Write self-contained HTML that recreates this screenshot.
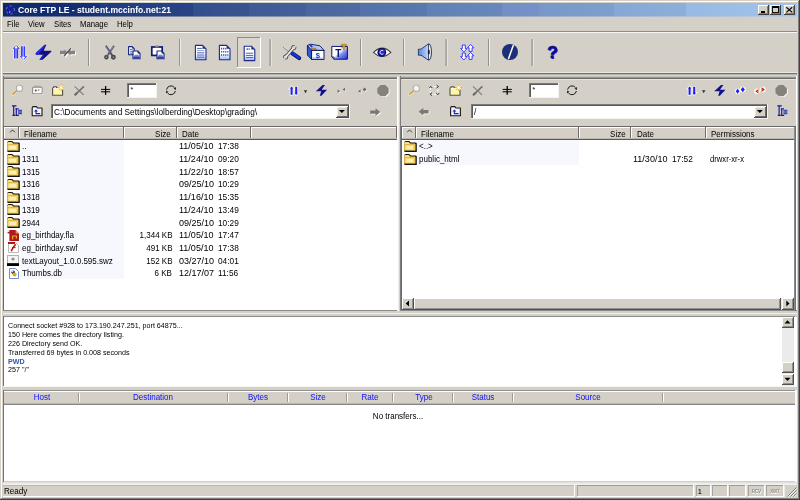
<!DOCTYPE html>
<html><head><meta charset="utf-8"><title>Core FTP LE</title>
<style>
html,body{margin:0;padding:0}
body{width:800px;height:500px;overflow:hidden;background:#d4d0c8;position:relative;font-family:"Liberation Sans",sans-serif;}
div,span.t,svg{position:absolute;display:block}
span.t{white-space:pre}
#w{left:0;top:0;width:800px;height:500px;will-change:transform}
</style></head><body><div id="w">
<div style="left:1px;top:1px;width:797px;height:1px;background:#ffffff;"></div>
<div style="left:1px;top:1px;width:1px;height:497px;background:#ffffff;"></div>
<div style="left:799px;top:0px;width:1px;height:500px;background:#404040;"></div>
<div style="left:798px;top:1px;width:1px;height:498px;background:#808080;"></div>
<div style="left:0px;top:499px;width:800px;height:1px;background:#404040;"></div>
<div style="left:1px;top:498px;width:798px;height:1px;background:#808080;"></div>
<div style="left:3px;top:3px;width:794px;height:13px;background:linear-gradient(to right,#0a246a,#a6caf0);"></div>
<div style="left:3px;top:3px;width:794px;height:13px;background:linear-gradient(to right,#102a70 0px,#102a70 97px,#223e82 97px,#223e82 190px,#355290 190px,#355290 246px,#405d98 246px,#405d98 303px,#4d689e 303px,#4d689e 357px,#5675ac 357px,#5675ac 424px,#6484b8 424px,#6484b8 499px,#7790cb 499px,#7790cb 536px,#7a9ccb 536px,#7a9ccb 611px,#89abd7 611px,#89abd7 683px,#9dc0e9 683px,#9dc0e9 794px);opacity:.55;"></div>
<div style="left:3px;top:16px;width:794px;height:1px;background:linear-gradient(to right,#0a246a,#a6caf0);opacity:.55;"></div>
<span class="t " style="left:18px;top:4px;font-size:9px;line-height:12px;height:12px;color:#fff;font-weight:bold;transform:scaleX(0.954);transform-origin:0 0;">Core FTP LE - student.mccinfo.net:21</span>
<svg style="left:5px;top:4px" width="11" height="12" viewBox="0 0 11 12"><circle cx="5.3" cy="6" r="3.9" fill="#1c1ca4"/><circle cx="5.3" cy="6" r="4.1" fill="none" stroke="#9aa8dc" stroke-width=".9" stroke-dasharray="2.2 2.6" stroke-dashoffset="1" opacity=".75"/><path d="M3.8 9.6 L6.6 2.6" stroke="#0c2470" stroke-width="1"/><path d="M4.4 9 L5.2 7" stroke="#c8b8d8" stroke-width=".8"/></svg>
<div style="left:758px;top:5px;width:11px;height:10px;background:#d4d0c8;"></div>
<div style="left:758px;top:5px;width:11px;height:1px;background:#ffffff;"></div>
<div style="left:758px;top:5px;width:1px;height:10px;background:#ffffff;"></div>
<div style="left:758px;top:14px;width:11px;height:1px;background:#404040;"></div>
<div style="left:768px;top:5px;width:1px;height:10px;background:#404040;"></div>
<div style="left:759px;top:13px;width:9px;height:1px;background:#808080;"></div>
<div style="left:767px;top:6px;width:1px;height:8px;background:#808080;"></div>
<div style="left:761px;top:11px;width:4px;height:2px;background:#000;"></div>
<div style="left:770px;top:5px;width:11px;height:10px;background:#d4d0c8;"></div>
<div style="left:770px;top:5px;width:11px;height:1px;background:#ffffff;"></div>
<div style="left:770px;top:5px;width:1px;height:10px;background:#ffffff;"></div>
<div style="left:770px;top:14px;width:11px;height:1px;background:#404040;"></div>
<div style="left:780px;top:5px;width:1px;height:10px;background:#404040;"></div>
<div style="left:771px;top:13px;width:9px;height:1px;background:#808080;"></div>
<div style="left:779px;top:6px;width:1px;height:8px;background:#808080;"></div>
<div style="left:772px;top:6px;width:7px;height:7px;background:transparent;border:1px solid #111;border-top:2px solid #000;box-sizing:border-box;"></div>
<div style="left:784px;top:5px;width:11px;height:10px;background:#d4d0c8;"></div>
<div style="left:784px;top:5px;width:11px;height:1px;background:#ffffff;"></div>
<div style="left:784px;top:5px;width:1px;height:10px;background:#ffffff;"></div>
<div style="left:784px;top:14px;width:11px;height:1px;background:#404040;"></div>
<div style="left:794px;top:5px;width:1px;height:10px;background:#404040;"></div>
<div style="left:785px;top:13px;width:9px;height:1px;background:#808080;"></div>
<div style="left:793px;top:6px;width:1px;height:8px;background:#808080;"></div>
<svg style="left:786px;top:7px" width="7" height="6" viewBox="0 0 7 6"><path d="M0.4 0.3 L6.2 5.4 M6.2 0.3 L0.4 5.4" stroke="#000" stroke-width="1.15" fill="none"/></svg>
<span class="t " style="left:7px;top:18px;font-size:9px;line-height:12px;height:12px;color:#000;transform:scaleX(0.86);transform-origin:0 0;">File</span>
<span class="t " style="left:28px;top:18px;font-size:9px;line-height:12px;height:12px;color:#000;transform:scaleX(0.86);transform-origin:0 0;">View</span>
<span class="t " style="left:54px;top:18px;font-size:9px;line-height:12px;height:12px;color:#000;transform:scaleX(0.86);transform-origin:0 0;">Sites</span>
<span class="t " style="left:80px;top:18px;font-size:9px;line-height:12px;height:12px;color:#000;transform:scaleX(0.86);transform-origin:0 0;">Manage</span>
<span class="t " style="left:117px;top:18px;font-size:9px;line-height:12px;height:12px;color:#000;transform:scaleX(0.86);transform-origin:0 0;">Help</span>
<div style="left:3px;top:31px;width:794px;height:1px;background:#8c8c8c;"></div>
<div style="left:3px;top:32px;width:794px;height:1px;background:#f6f6f4;"></div>
<div style="left:88px;top:39px;width:1px;height:27px;background:#929290;"></div>
<div style="left:89px;top:39px;width:1px;height:27px;background:#f0efec;"></div>
<div style="left:179px;top:39px;width:1px;height:27px;background:#929290;"></div>
<div style="left:180px;top:39px;width:1px;height:27px;background:#f0efec;"></div>
<div style="left:269px;top:39px;width:1px;height:27px;background:#b2b0aa;"></div>
<div style="left:270px;top:39px;width:1px;height:27px;background:#a6a4a0;"></div>
<div style="left:271px;top:39px;width:1px;height:27px;background:#e8e6e2;"></div>
<div style="left:360px;top:39px;width:1px;height:27px;background:#929290;"></div>
<div style="left:361px;top:39px;width:1px;height:27px;background:#f0efec;"></div>
<div style="left:403px;top:39px;width:1px;height:27px;background:#929290;"></div>
<div style="left:404px;top:39px;width:1px;height:27px;background:#f0efec;"></div>
<div style="left:445px;top:39px;width:1px;height:27px;background:#b2b0aa;"></div>
<div style="left:446px;top:39px;width:1px;height:27px;background:#a6a4a0;"></div>
<div style="left:447px;top:39px;width:1px;height:27px;background:#e8e6e2;"></div>
<div style="left:488px;top:39px;width:1px;height:27px;background:#929290;"></div>
<div style="left:489px;top:39px;width:1px;height:27px;background:#f0efec;"></div>
<div style="left:531px;top:39px;width:1px;height:27px;background:#b2b0aa;"></div>
<div style="left:532px;top:39px;width:1px;height:27px;background:#a6a4a0;"></div>
<div style="left:533px;top:39px;width:1px;height:27px;background:#e8e6e2;"></div>
<div style="left:3px;top:72px;width:794px;height:1px;background:#ebe9e4;"></div>
<div style="left:3px;top:73px;width:794px;height:1px;background:#6e6e6c;"></div>
<div style="left:3px;top:74px;width:794px;height:1px;background:#bab6ae;"></div>
<div style="left:237px;top:37px;width:23px;height:30px;background:#d9d6cf;"></div>
<div style="left:237px;top:37px;width:23px;height:1px;background:#8a8a88;"></div>
<div style="left:237px;top:37px;width:1px;height:30px;background:#8a8a88;"></div>
<div style="left:237px;top:67px;width:24px;height:1px;background:#ffffff;"></div>
<div style="left:260px;top:37px;width:1px;height:31px;background:#ffffff;"></div>
<div style="left:3px;top:76px;width:394px;height:1px;background:#c6c2ba;"></div>
<div style="left:3px;top:77px;width:394px;height:1px;background:#9c9890;"></div>
<div style="left:3px;top:78px;width:394px;height:1px;background:#6c6c6c;"></div>
<div style="left:5px;top:79px;width:392px;height:1px;background:#e6e4de;"></div>
<div style="left:3px;top:76px;width:1px;height:235px;background:#7c7c7c;"></div>
<div style="left:4px;top:127px;width:393px;height:183px;background:#ffffff;"></div>
<div style="left:3px;top:126px;width:394px;height:1px;background:#686868;"></div>
<div style="left:3px;top:126px;width:1px;height:184px;background:#686868;"></div>
<div style="left:4px;top:127px;width:393px;height:12px;background:#d4d0c8;"></div>
<div style="left:4px;top:127px;width:1px;height:11px;background:#ffffff;"></div>
<div style="left:4px;top:127px;width:14px;height:1px;background:#ffffff;"></div>
<div style="left:18px;top:127px;width:1px;height:12px;background:#6c6c6c;"></div>
<div style="left:19px;top:127px;width:1px;height:11px;background:#ffffff;"></div>
<div style="left:19px;top:127px;width:104px;height:1px;background:#ffffff;"></div>
<div style="left:123px;top:127px;width:1px;height:12px;background:#6c6c6c;"></div>
<span class="t " style="left:24px;top:128px;font-size:9.6px;line-height:11px;height:11px;color:#000;transform:scaleX(0.834);transform-origin:0 0;">Filename</span>
<div style="left:124px;top:127px;width:1px;height:11px;background:#ffffff;"></div>
<div style="left:124px;top:127px;width:52px;height:1px;background:#ffffff;"></div>
<div style="left:176px;top:127px;width:1px;height:12px;background:#6c6c6c;"></div>
<span class="t " style="right:629px;top:128px;font-size:9.6px;line-height:11px;height:11px;color:#000;transform:scaleX(0.834);transform-origin:100% 0;">Size</span>
<div style="left:177px;top:127px;width:1px;height:11px;background:#ffffff;"></div>
<div style="left:177px;top:127px;width:73px;height:1px;background:#ffffff;"></div>
<div style="left:250px;top:127px;width:1px;height:12px;background:#6c6c6c;"></div>
<span class="t " style="left:181.5px;top:128px;font-size:9.6px;line-height:11px;height:11px;color:#000;transform:scaleX(0.834);transform-origin:0 0;">Date</span>
<div style="left:251px;top:127px;width:1px;height:11px;background:#ffffff;"></div>
<div style="left:251px;top:127px;width:145px;height:1px;background:#ffffff;"></div>
<div style="left:396px;top:127px;width:1px;height:12px;background:#6c6c6c;"></div>
<div style="left:4px;top:138px;width:393px;height:1px;background:#bcb8b0;"></div>
<div style="left:4px;top:139px;width:393px;height:1px;background:#585858;"></div>
<div style="left:20px;top:140px;width:104px;height:139px;background:#f7f7fe;"></div>
<svg style="left:9px;top:129px" width="7" height="4" viewBox="0 0 7 4"><path d="M1.1 3.3 L3.5 0.9 L5.9 3.3" stroke="#3a3a3a" stroke-width="1" fill="none"/></svg>
<div style="left:4px;top:310px;width:393px;height:1px;background:#8a8a8a;"></div>
<svg style="left:7px;top:141px" width="13" height="11" viewBox="0 0 13 11"><path d="M0.2 2.2 Q0.2 0 2 0 H5.2 L6.8 1.5 H11.6 Q12.8 1.5 12.8 2.8 V11 H1.2 Q0.2 11 0.2 10 Z" fill="#181208"/><path d="M0 2.5 Q0 1 1.6 1 H4.8 L6.2 2.6 H10.6 Q11.5 2.6 11.5 3.5 V9.6 H0.9 Q0 9.6 0 8.8 Z" fill="#f2cc58"/><path d="M0 3 V8.8 Q0 9.6 0.9 9.6 H1 V3 Z" fill="#dcae40"/><path d="M1 1.5 H4.6 L5.7 2.8 H1 Z" fill="#fbe9a0"/><path d="M0.8 3.3 H10.9 V4.2 H0.8 Z" fill="#e0b044"/><path d="M0.9 4.2 H11 V9.2 H0.9 Z" fill="#f6d76c"/><rect x="2.4" y="4.8" width="7.2" height="3.4" fill="#fdf0b4"/><path d="M9.6 5 H11 V9.2 H9.6 Z" fill="#eec24e"/></svg>
<span class="t " style="left:22px;top:140.37px;font-size:9.6px;line-height:12px;height:12px;color:#000;transform:scaleX(0.834);transform-origin:0 0;">..</span>
<span class="t " style="left:178.7px;top:140.37px;font-size:9.6px;line-height:12px;height:12px;color:#000;transform:scaleX(0.94);transform-origin:0 0;">11/05/10</span>
<span class="t " style="left:217.9px;top:140.37px;font-size:9.6px;line-height:12px;height:12px;color:#000;transform:scaleX(0.865);transform-origin:0 0;">17:38</span>
<svg style="left:7px;top:154px" width="13" height="11" viewBox="0 0 13 11"><path d="M0.2 2.2 Q0.2 0 2 0 H5.2 L6.8 1.5 H11.6 Q12.8 1.5 12.8 2.8 V11 H1.2 Q0.2 11 0.2 10 Z" fill="#181208"/><path d="M0 2.5 Q0 1 1.6 1 H4.8 L6.2 2.6 H10.6 Q11.5 2.6 11.5 3.5 V9.6 H0.9 Q0 9.6 0 8.8 Z" fill="#f2cc58"/><path d="M0 3 V8.8 Q0 9.6 0.9 9.6 H1 V3 Z" fill="#dcae40"/><path d="M1 1.5 H4.6 L5.7 2.8 H1 Z" fill="#fbe9a0"/><path d="M0.8 3.3 H10.9 V4.2 H0.8 Z" fill="#e0b044"/><path d="M0.9 4.2 H11 V9.2 H0.9 Z" fill="#f6d76c"/><rect x="2.4" y="4.8" width="7.2" height="3.4" fill="#fdf0b4"/><path d="M9.6 5 H11 V9.2 H9.6 Z" fill="#eec24e"/></svg>
<span class="t " style="left:22px;top:153.07px;font-size:9.6px;line-height:12px;height:12px;color:#000;transform:scaleX(0.834);transform-origin:0 0;">1311</span>
<span class="t " style="left:178.7px;top:153.07px;font-size:9.6px;line-height:12px;height:12px;color:#000;transform:scaleX(0.94);transform-origin:0 0;">11/24/10</span>
<span class="t " style="left:217.9px;top:153.07px;font-size:9.6px;line-height:12px;height:12px;color:#000;transform:scaleX(0.865);transform-origin:0 0;">09:20</span>
<svg style="left:7px;top:166px" width="13" height="11" viewBox="0 0 13 11"><path d="M0.2 2.2 Q0.2 0 2 0 H5.2 L6.8 1.5 H11.6 Q12.8 1.5 12.8 2.8 V11 H1.2 Q0.2 11 0.2 10 Z" fill="#181208"/><path d="M0 2.5 Q0 1 1.6 1 H4.8 L6.2 2.6 H10.6 Q11.5 2.6 11.5 3.5 V9.6 H0.9 Q0 9.6 0 8.8 Z" fill="#f2cc58"/><path d="M0 3 V8.8 Q0 9.6 0.9 9.6 H1 V3 Z" fill="#dcae40"/><path d="M1 1.5 H4.6 L5.7 2.8 H1 Z" fill="#fbe9a0"/><path d="M0.8 3.3 H10.9 V4.2 H0.8 Z" fill="#e0b044"/><path d="M0.9 4.2 H11 V9.2 H0.9 Z" fill="#f6d76c"/><rect x="2.4" y="4.8" width="7.2" height="3.4" fill="#fdf0b4"/><path d="M9.6 5 H11 V9.2 H9.6 Z" fill="#eec24e"/></svg>
<span class="t " style="left:22px;top:165.77px;font-size:9.6px;line-height:12px;height:12px;color:#000;transform:scaleX(0.834);transform-origin:0 0;">1315</span>
<span class="t " style="left:178.7px;top:165.77px;font-size:9.6px;line-height:12px;height:12px;color:#000;transform:scaleX(0.94);transform-origin:0 0;">11/22/10</span>
<span class="t " style="left:217.9px;top:165.77px;font-size:9.6px;line-height:12px;height:12px;color:#000;transform:scaleX(0.865);transform-origin:0 0;">18:57</span>
<svg style="left:7px;top:179px" width="13" height="11" viewBox="0 0 13 11"><path d="M0.2 2.2 Q0.2 0 2 0 H5.2 L6.8 1.5 H11.6 Q12.8 1.5 12.8 2.8 V11 H1.2 Q0.2 11 0.2 10 Z" fill="#181208"/><path d="M0 2.5 Q0 1 1.6 1 H4.8 L6.2 2.6 H10.6 Q11.5 2.6 11.5 3.5 V9.6 H0.9 Q0 9.6 0 8.8 Z" fill="#f2cc58"/><path d="M0 3 V8.8 Q0 9.6 0.9 9.6 H1 V3 Z" fill="#dcae40"/><path d="M1 1.5 H4.6 L5.7 2.8 H1 Z" fill="#fbe9a0"/><path d="M0.8 3.3 H10.9 V4.2 H0.8 Z" fill="#e0b044"/><path d="M0.9 4.2 H11 V9.2 H0.9 Z" fill="#f6d76c"/><rect x="2.4" y="4.8" width="7.2" height="3.4" fill="#fdf0b4"/><path d="M9.6 5 H11 V9.2 H9.6 Z" fill="#eec24e"/></svg>
<span class="t " style="left:22px;top:178.47px;font-size:9.6px;line-height:12px;height:12px;color:#000;transform:scaleX(0.834);transform-origin:0 0;">1316</span>
<span class="t " style="left:178.7px;top:178.47px;font-size:9.6px;line-height:12px;height:12px;color:#000;transform:scaleX(0.94);transform-origin:0 0;">09/25/10</span>
<span class="t " style="left:217.9px;top:178.47px;font-size:9.6px;line-height:12px;height:12px;color:#000;transform:scaleX(0.865);transform-origin:0 0;">10:29</span>
<svg style="left:7px;top:192px" width="13" height="11" viewBox="0 0 13 11"><path d="M0.2 2.2 Q0.2 0 2 0 H5.2 L6.8 1.5 H11.6 Q12.8 1.5 12.8 2.8 V11 H1.2 Q0.2 11 0.2 10 Z" fill="#181208"/><path d="M0 2.5 Q0 1 1.6 1 H4.8 L6.2 2.6 H10.6 Q11.5 2.6 11.5 3.5 V9.6 H0.9 Q0 9.6 0 8.8 Z" fill="#f2cc58"/><path d="M0 3 V8.8 Q0 9.6 0.9 9.6 H1 V3 Z" fill="#dcae40"/><path d="M1 1.5 H4.6 L5.7 2.8 H1 Z" fill="#fbe9a0"/><path d="M0.8 3.3 H10.9 V4.2 H0.8 Z" fill="#e0b044"/><path d="M0.9 4.2 H11 V9.2 H0.9 Z" fill="#f6d76c"/><rect x="2.4" y="4.8" width="7.2" height="3.4" fill="#fdf0b4"/><path d="M9.6 5 H11 V9.2 H9.6 Z" fill="#eec24e"/></svg>
<span class="t " style="left:22px;top:191.17px;font-size:9.6px;line-height:12px;height:12px;color:#000;transform:scaleX(0.834);transform-origin:0 0;">1318</span>
<span class="t " style="left:178.7px;top:191.17px;font-size:9.6px;line-height:12px;height:12px;color:#000;transform:scaleX(0.94);transform-origin:0 0;">11/16/10</span>
<span class="t " style="left:217.9px;top:191.17px;font-size:9.6px;line-height:12px;height:12px;color:#000;transform:scaleX(0.865);transform-origin:0 0;">15:35</span>
<svg style="left:7px;top:204px" width="13" height="11" viewBox="0 0 13 11"><path d="M0.2 2.2 Q0.2 0 2 0 H5.2 L6.8 1.5 H11.6 Q12.8 1.5 12.8 2.8 V11 H1.2 Q0.2 11 0.2 10 Z" fill="#181208"/><path d="M0 2.5 Q0 1 1.6 1 H4.8 L6.2 2.6 H10.6 Q11.5 2.6 11.5 3.5 V9.6 H0.9 Q0 9.6 0 8.8 Z" fill="#f2cc58"/><path d="M0 3 V8.8 Q0 9.6 0.9 9.6 H1 V3 Z" fill="#dcae40"/><path d="M1 1.5 H4.6 L5.7 2.8 H1 Z" fill="#fbe9a0"/><path d="M0.8 3.3 H10.9 V4.2 H0.8 Z" fill="#e0b044"/><path d="M0.9 4.2 H11 V9.2 H0.9 Z" fill="#f6d76c"/><rect x="2.4" y="4.8" width="7.2" height="3.4" fill="#fdf0b4"/><path d="M9.6 5 H11 V9.2 H9.6 Z" fill="#eec24e"/></svg>
<span class="t " style="left:22px;top:203.87px;font-size:9.6px;line-height:12px;height:12px;color:#000;transform:scaleX(0.834);transform-origin:0 0;">1319</span>
<span class="t " style="left:178.7px;top:203.87px;font-size:9.6px;line-height:12px;height:12px;color:#000;transform:scaleX(0.94);transform-origin:0 0;">11/24/10</span>
<span class="t " style="left:217.9px;top:203.87px;font-size:9.6px;line-height:12px;height:12px;color:#000;transform:scaleX(0.865);transform-origin:0 0;">13:49</span>
<svg style="left:7px;top:217px" width="13" height="11" viewBox="0 0 13 11"><path d="M0.2 2.2 Q0.2 0 2 0 H5.2 L6.8 1.5 H11.6 Q12.8 1.5 12.8 2.8 V11 H1.2 Q0.2 11 0.2 10 Z" fill="#181208"/><path d="M0 2.5 Q0 1 1.6 1 H4.8 L6.2 2.6 H10.6 Q11.5 2.6 11.5 3.5 V9.6 H0.9 Q0 9.6 0 8.8 Z" fill="#f2cc58"/><path d="M0 3 V8.8 Q0 9.6 0.9 9.6 H1 V3 Z" fill="#dcae40"/><path d="M1 1.5 H4.6 L5.7 2.8 H1 Z" fill="#fbe9a0"/><path d="M0.8 3.3 H10.9 V4.2 H0.8 Z" fill="#e0b044"/><path d="M0.9 4.2 H11 V9.2 H0.9 Z" fill="#f6d76c"/><rect x="2.4" y="4.8" width="7.2" height="3.4" fill="#fdf0b4"/><path d="M9.6 5 H11 V9.2 H9.6 Z" fill="#eec24e"/></svg>
<span class="t " style="left:22px;top:216.57px;font-size:9.6px;line-height:12px;height:12px;color:#000;transform:scaleX(0.834);transform-origin:0 0;">2944</span>
<span class="t " style="left:178.7px;top:216.57px;font-size:9.6px;line-height:12px;height:12px;color:#000;transform:scaleX(0.94);transform-origin:0 0;">09/25/10</span>
<span class="t " style="left:217.9px;top:216.57px;font-size:9.6px;line-height:12px;height:12px;color:#000;transform:scaleX(0.865);transform-origin:0 0;">10:29</span>
<svg style="left:7px;top:230px" width="12" height="11" viewBox="0 0 12 11"><path d="M2.4 0 H8.6 L12 3.4 V11 H2.4 Z" fill="#ae1820"/><path d="M0.6 1.8 H4 V3.4 H0.6 Z" fill="#ae1820"/><path d="M8.6 0 V3.4 H12 Z" fill="#e89858"/><path d="M5.6 9.4 V6 H9.4 V8.4" stroke="#eaa428" stroke-width="1.2" fill="none"/></svg>
<span class="t " style="left:22px;top:229.27px;font-size:9.6px;line-height:12px;height:12px;color:#000;transform:scaleX(0.834);transform-origin:0 0;">eg_birthday.fla</span>
<span class="t " style="right:628px;top:229.27px;font-size:9.6px;line-height:12px;height:12px;color:#000;transform:scaleX(0.834);transform-origin:100% 0;">1,344 KB</span>
<span class="t " style="left:178.7px;top:229.27px;font-size:9.6px;line-height:12px;height:12px;color:#000;transform:scaleX(0.94);transform-origin:0 0;">11/05/10</span>
<span class="t " style="left:217.9px;top:229.27px;font-size:9.6px;line-height:12px;height:12px;color:#000;transform:scaleX(0.865);transform-origin:0 0;">17:47</span>
<svg style="left:8px;top:242px" width="11" height="11" viewBox="0 0 11 11"><path d="M0.5 0.5 H7.5 L10.5 3.5 V10.5 H0.5 Z" fill="#fff" stroke="#b8b8b8"/><path d="M0 0 H7 V2 H0 Z" fill="#b01818"/><path d="M7.6 2.2 C6 4 4.5 6 3.2 9.2" stroke="#c01010" stroke-width="1.6" fill="none"/><path d="M4 5.6 H7.6" stroke="#c01010" stroke-width="1"/></svg>
<span class="t " style="left:22px;top:241.97px;font-size:9.6px;line-height:12px;height:12px;color:#000;transform:scaleX(0.834);transform-origin:0 0;">eg_birthday.swf</span>
<span class="t " style="right:628px;top:241.97px;font-size:9.6px;line-height:12px;height:12px;color:#000;transform:scaleX(0.834);transform-origin:100% 0;">491 KB</span>
<span class="t " style="left:178.7px;top:241.97px;font-size:9.6px;line-height:12px;height:12px;color:#000;transform:scaleX(0.94);transform-origin:0 0;">11/05/10</span>
<span class="t " style="left:217.9px;top:241.97px;font-size:9.6px;line-height:12px;height:12px;color:#000;transform:scaleX(0.865);transform-origin:0 0;">17:38</span>
<svg style="left:7px;top:255px" width="12" height="11" viewBox="0 0 12 11"><rect x="0.5" y="0.5" width="11" height="8" fill="#f4f4f4" stroke="#b0b0b0"/><rect x="0" y="8.2" width="12" height="2.8" fill="#000"/><circle cx="6" cy="4" r="1.6" fill="#909090"/></svg>
<span class="t " style="left:22px;top:254.67px;font-size:9.6px;line-height:12px;height:12px;color:#000;transform:scaleX(0.834);transform-origin:0 0;">textLayout_1.0.0.595.swz</span>
<span class="t " style="right:628px;top:254.67px;font-size:9.6px;line-height:12px;height:12px;color:#000;transform:scaleX(0.834);transform-origin:100% 0;">152 KB</span>
<span class="t " style="left:178.7px;top:254.67px;font-size:9.6px;line-height:12px;height:12px;color:#000;transform:scaleX(0.94);transform-origin:0 0;">03/27/10</span>
<span class="t " style="left:217.9px;top:254.67px;font-size:9.6px;line-height:12px;height:12px;color:#000;transform:scaleX(0.865);transform-origin:0 0;">04:01</span>
<svg style="left:9px;top:268px" width="10" height="11" viewBox="0 0 10 11"><path d="M0.5 0.5 H6.5 L9.5 3.5 V10.5 H0.5 Z" fill="#fff" stroke="#6a90d8"/><circle cx="4.2" cy="4.2" r="1.8" fill="#333"/><circle cx="5.6" cy="6.4" r="2" fill="#e0a820"/><circle cx="3.6" cy="3.6" r="0.8" fill="#e8e8ff"/></svg>
<span class="t " style="left:22px;top:267.37px;font-size:9.6px;line-height:12px;height:12px;color:#000;transform:scaleX(0.834);transform-origin:0 0;">Thumbs.db</span>
<span class="t " style="right:628px;top:267.37px;font-size:9.6px;line-height:12px;height:12px;color:#000;transform:scaleX(0.834);transform-origin:100% 0;">6 KB</span>
<span class="t " style="left:178.7px;top:267.37px;font-size:9.6px;line-height:12px;height:12px;color:#000;transform:scaleX(0.94);transform-origin:0 0;">12/17/07</span>
<span class="t " style="left:217.9px;top:267.37px;font-size:9.6px;line-height:12px;height:12px;color:#000;transform:scaleX(0.865);transform-origin:0 0;">11:56</span>
<div style="left:400px;top:76px;width:397px;height:1px;background:#c6c2ba;"></div>
<div style="left:400px;top:77px;width:397px;height:1px;background:#9c9890;"></div>
<div style="left:400px;top:78px;width:397px;height:1px;background:#6c6c6c;"></div>
<div style="left:402px;top:79px;width:395px;height:1px;background:#e6e4de;"></div>
<div style="left:400px;top:76px;width:1px;height:235px;background:#7c7c7c;"></div>
<div style="left:401px;top:127px;width:1px;height:183px;background:#606060;"></div>
<div style="left:402px;top:127px;width:394px;height:183px;background:#ffffff;"></div>
<div style="left:401px;top:126px;width:395px;height:1px;background:#686868;"></div>
<div style="left:401px;top:126px;width:1px;height:184px;background:#686868;"></div>
<div style="left:402px;top:127px;width:394px;height:12px;background:#d4d0c8;"></div>
<div style="left:402px;top:127px;width:1px;height:11px;background:#ffffff;"></div>
<div style="left:402px;top:127px;width:13px;height:1px;background:#ffffff;"></div>
<div style="left:415px;top:127px;width:1px;height:12px;background:#6c6c6c;"></div>
<div style="left:416px;top:127px;width:1px;height:11px;background:#ffffff;"></div>
<div style="left:416px;top:127px;width:162px;height:1px;background:#ffffff;"></div>
<div style="left:578px;top:127px;width:1px;height:12px;background:#6c6c6c;"></div>
<span class="t " style="left:421px;top:128px;font-size:9.6px;line-height:11px;height:11px;color:#000;transform:scaleX(0.834);transform-origin:0 0;">Filename</span>
<div style="left:579px;top:127px;width:1px;height:11px;background:#ffffff;"></div>
<div style="left:579px;top:127px;width:51px;height:1px;background:#ffffff;"></div>
<div style="left:630px;top:127px;width:1px;height:12px;background:#6c6c6c;"></div>
<span class="t " style="right:174px;top:128px;font-size:9.6px;line-height:11px;height:11px;color:#000;transform:scaleX(0.834);transform-origin:100% 0;">Size</span>
<div style="left:631px;top:127px;width:1px;height:11px;background:#ffffff;"></div>
<div style="left:631px;top:127px;width:74px;height:1px;background:#ffffff;"></div>
<div style="left:705px;top:127px;width:1px;height:12px;background:#6c6c6c;"></div>
<span class="t " style="left:637px;top:128px;font-size:9.6px;line-height:11px;height:11px;color:#000;transform:scaleX(0.834);transform-origin:0 0;">Date</span>
<div style="left:706px;top:127px;width:1px;height:11px;background:#ffffff;"></div>
<div style="left:706px;top:127px;width:89px;height:1px;background:#ffffff;"></div>
<div style="left:795px;top:127px;width:1px;height:12px;background:#6c6c6c;"></div>
<span class="t " style="left:711px;top:128px;font-size:9.6px;line-height:11px;height:11px;color:#000;transform:scaleX(0.834);transform-origin:0 0;">Permissions</span>
<div style="left:402px;top:138px;width:394px;height:1px;background:#bcb8b0;"></div>
<div style="left:402px;top:139px;width:394px;height:1px;background:#585858;"></div>
<div style="left:417px;top:140px;width:162px;height:25px;background:#f7f7fe;"></div>
<svg style="left:406px;top:129px" width="7" height="4" viewBox="0 0 7 4"><path d="M1.1 3.3 L3.5 0.9 L5.9 3.3" stroke="#3a3a3a" stroke-width="1" fill="none"/></svg>
<svg style="left:404px;top:141px" width="13" height="11" viewBox="0 0 13 11"><path d="M0.2 2.2 Q0.2 0 2 0 H5.2 L6.8 1.5 H11.6 Q12.8 1.5 12.8 2.8 V11 H1.2 Q0.2 11 0.2 10 Z" fill="#181208"/><path d="M0 2.5 Q0 1 1.6 1 H4.8 L6.2 2.6 H10.6 Q11.5 2.6 11.5 3.5 V9.6 H0.9 Q0 9.6 0 8.8 Z" fill="#f2cc58"/><path d="M0 3 V8.8 Q0 9.6 0.9 9.6 H1 V3 Z" fill="#dcae40"/><path d="M1 1.5 H4.6 L5.7 2.8 H1 Z" fill="#fbe9a0"/><path d="M0.8 3.3 H10.9 V4.2 H0.8 Z" fill="#e0b044"/><path d="M0.9 4.2 H11 V9.2 H0.9 Z" fill="#f6d76c"/><rect x="2.4" y="4.8" width="7.2" height="3.4" fill="#fdf0b4"/><path d="M9.6 5 H11 V9.2 H9.6 Z" fill="#eec24e"/></svg>
<span class="t " style="left:419px;top:140.37px;font-size:9.6px;line-height:12px;height:12px;color:#000;transform:scaleX(0.834);transform-origin:0 0;">&lt;..&gt;</span>
<svg style="left:404px;top:154px" width="13" height="11" viewBox="0 0 13 11"><path d="M0.2 2.2 Q0.2 0 2 0 H5.2 L6.8 1.5 H11.6 Q12.8 1.5 12.8 2.8 V11 H1.2 Q0.2 11 0.2 10 Z" fill="#181208"/><path d="M0 2.5 Q0 1 1.6 1 H4.8 L6.2 2.6 H10.6 Q11.5 2.6 11.5 3.5 V9.6 H0.9 Q0 9.6 0 8.8 Z" fill="#f2cc58"/><path d="M0 3 V8.8 Q0 9.6 0.9 9.6 H1 V3 Z" fill="#dcae40"/><path d="M1 1.5 H4.6 L5.7 2.8 H1 Z" fill="#fbe9a0"/><path d="M0.8 3.3 H10.9 V4.2 H0.8 Z" fill="#e0b044"/><path d="M0.9 4.2 H11 V9.2 H0.9 Z" fill="#f6d76c"/><rect x="2.4" y="4.8" width="7.2" height="3.4" fill="#fdf0b4"/><path d="M9.6 5 H11 V9.2 H9.6 Z" fill="#eec24e"/></svg>
<span class="t " style="left:419px;top:153.07px;font-size:9.6px;line-height:12px;height:12px;color:#000;transform:scaleX(0.834);transform-origin:0 0;">public_html</span>
<span class="t " style="left:633.2px;top:153.07px;font-size:9.6px;line-height:12px;height:12px;color:#000;transform:scaleX(0.94);transform-origin:0 0;">11/30/10</span>
<span class="t " style="left:672.4px;top:153.07px;font-size:9.6px;line-height:12px;height:12px;color:#000;transform:scaleX(0.865);transform-origin:0 0;">17:52</span>
<span class="t " style="left:710px;top:153.07px;font-size:9.6px;line-height:12px;height:12px;color:#000;transform:scaleX(0.797);transform-origin:0 0;">drwxr-xr-x</span>
<div style="left:796px;top:76px;width:1px;height:235px;background:#ffffff;"></div>
<div style="left:397px;top:77px;width:1px;height:234px;background:#ffffff;"></div>
<div style="left:398px;top:77px;width:1px;height:234px;background:#eeede9;"></div>
<div style="left:402px;top:298px;width:394px;height:12px;background:#eceae6;"></div>
<div style="left:402px;top:298px;width:12px;height:12px;background:#d4d0c8;"></div>
<div style="left:402px;top:298px;width:11px;height:1px;background:#ffffff;"></div>
<div style="left:402px;top:298px;width:1px;height:11px;background:#ffffff;"></div>
<div style="left:402px;top:309px;width:12px;height:1px;background:#505050;"></div>
<div style="left:413px;top:298px;width:1px;height:12px;background:#505050;"></div>
<div style="left:403px;top:308px;width:10px;height:1px;background:#909090;"></div>
<div style="left:412px;top:299px;width:1px;height:10px;background:#909090;"></div>
<svg style="left:0;top:0" width="800" height="500"><path d="M409.0 300.5 L405.7 303.5 L409.0 306.5 Z" fill="#000"/></svg>
<div style="left:414px;top:298px;width:367px;height:12px;background:#d4d0c8;"></div>
<div style="left:414px;top:298px;width:366px;height:1px;background:#ffffff;"></div>
<div style="left:414px;top:298px;width:1px;height:11px;background:#ffffff;"></div>
<div style="left:414px;top:309px;width:367px;height:1px;background:#505050;"></div>
<div style="left:780px;top:298px;width:1px;height:12px;background:#505050;"></div>
<div style="left:415px;top:308px;width:365px;height:1px;background:#909090;"></div>
<div style="left:779px;top:299px;width:1px;height:10px;background:#909090;"></div>
<div style="left:782px;top:298px;width:12px;height:12px;background:#d4d0c8;"></div>
<div style="left:782px;top:298px;width:11px;height:1px;background:#ffffff;"></div>
<div style="left:782px;top:298px;width:1px;height:11px;background:#ffffff;"></div>
<div style="left:782px;top:309px;width:12px;height:1px;background:#505050;"></div>
<div style="left:793px;top:298px;width:1px;height:12px;background:#505050;"></div>
<div style="left:783px;top:308px;width:10px;height:1px;background:#909090;"></div>
<div style="left:792px;top:299px;width:1px;height:10px;background:#909090;"></div>
<svg style="left:0;top:0" width="800" height="500"><path d="M786.3 300.5 L789.5 303.5 L786.3 306.5 Z" fill="#000"/></svg>
<div style="left:400px;top:310px;width:397px;height:1px;background:#8a8a8a;"></div>
<div style="left:794px;top:127px;width:1px;height:183px;background:#8c8c8c;"></div>
<div style="left:795px;top:127px;width:1px;height:184px;background:#707070;"></div>
<div style="left:3px;top:313px;width:794px;height:1px;background:#f0eeea;"></div>
<div style="left:3px;top:316px;width:792px;height:1px;background:#8c8c8c;"></div>
<div style="left:3px;top:317px;width:794px;height:69px;background:#ffffff;"></div>
<div style="left:3px;top:316px;width:1px;height:70px;background:#707070;"></div>
<div style="left:3px;top:386px;width:794px;height:1px;background:#f6f5f2;"></div>
<span class="t " style="left:7.5px;top:321px;font-size:7px;line-height:9px;height:9px;color:#000;transform:scaleX(1.02);transform-origin:0 0;">Connect socket #928 to 173.190.247.251, port 64875...</span>
<span class="t " style="left:7.5px;top:330px;font-size:7px;line-height:9px;height:9px;color:#000;transform:scaleX(1.02);transform-origin:0 0;">150 Here comes the directory listing.</span>
<span class="t " style="left:7.5px;top:339px;font-size:7px;line-height:9px;height:9px;color:#000;transform:scaleX(1.02);transform-origin:0 0;">226 Directory send OK.</span>
<span class="t " style="left:7.5px;top:348px;font-size:7px;line-height:9px;height:9px;color:#000;transform:scaleX(1.02);transform-origin:0 0;">Transferred 69 bytes in 0.008 seconds</span>
<span class="t " style="left:7.5px;top:357px;font-size:7px;line-height:9px;height:9px;color:#3355aa;font-weight:bold;transform:scaleX(1.02);transform-origin:0 0;">PWD</span>
<span class="t " style="left:7.5px;top:365px;font-size:7px;line-height:9px;height:9px;color:#000;transform:scaleX(1.02);transform-origin:0 0;">257 &quot;/&quot;</span>
<div style="left:782px;top:317px;width:12px;height:69px;background:#ebebeb;"></div>
<div style="left:782px;top:317px;width:12px;height:11px;background:#d4d0c8;"></div>
<div style="left:782px;top:317px;width:11px;height:1px;background:#ffffff;"></div>
<div style="left:782px;top:317px;width:1px;height:10px;background:#ffffff;"></div>
<div style="left:782px;top:327px;width:12px;height:1px;background:#505050;"></div>
<div style="left:793px;top:317px;width:1px;height:11px;background:#505050;"></div>
<div style="left:783px;top:326px;width:10px;height:1px;background:#909090;"></div>
<div style="left:792px;top:318px;width:1px;height:9px;background:#909090;"></div>
<svg style="left:0;top:0" width="800" height="500"><path d="M784.5 323.5 L787.5 320.2 L790.5 323.5 Z" fill="#000"/></svg>
<div style="left:782px;top:362px;width:12px;height:11px;background:#d4d0c8;"></div>
<div style="left:782px;top:362px;width:11px;height:1px;background:#ffffff;"></div>
<div style="left:782px;top:362px;width:1px;height:10px;background:#ffffff;"></div>
<div style="left:782px;top:372px;width:12px;height:1px;background:#505050;"></div>
<div style="left:793px;top:362px;width:1px;height:11px;background:#505050;"></div>
<div style="left:783px;top:371px;width:10px;height:1px;background:#909090;"></div>
<div style="left:792px;top:363px;width:1px;height:9px;background:#909090;"></div>
<div style="left:782px;top:374px;width:12px;height:11px;background:#d4d0c8;"></div>
<div style="left:782px;top:374px;width:11px;height:1px;background:#ffffff;"></div>
<div style="left:782px;top:374px;width:1px;height:10px;background:#ffffff;"></div>
<div style="left:782px;top:384px;width:12px;height:1px;background:#505050;"></div>
<div style="left:793px;top:374px;width:1px;height:11px;background:#505050;"></div>
<div style="left:783px;top:383px;width:10px;height:1px;background:#909090;"></div>
<div style="left:792px;top:375px;width:1px;height:9px;background:#909090;"></div>
<svg style="left:0;top:0" width="800" height="500"><path d="M784.5 377.8 L787.5 381.0 L790.5 377.8 Z" fill="#000"/></svg>
<div style="left:3px;top:390px;width:792px;height:1px;background:#8e8e8e;"></div>
<div style="left:3px;top:390px;width:1px;height:92px;background:#747474;"></div>
<div style="left:4px;top:391px;width:792px;height:90px;background:#ffffff;"></div>
<div style="left:4px;top:391px;width:792px;height:13px;background:#d4d0c8;"></div>
<span class="t " style="left:-58.5px;width:200px;text-align:center;top:391px;font-size:9.6px;line-height:11px;height:11px;color:#1010f4;transform:scaleX(0.834);transform-origin:50% 0;">Host</span>
<div style="left:78px;top:393px;width:1px;height:9px;background:#9a9a9a;"></div>
<div style="left:79px;top:393px;width:1px;height:9px;background:#ffffff;"></div>
<span class="t " style="left:53px;width:200px;text-align:center;top:391px;font-size:9.6px;line-height:11px;height:11px;color:#1010f4;transform:scaleX(0.834);transform-origin:50% 0;">Destination</span>
<div style="left:227px;top:393px;width:1px;height:9px;background:#9a9a9a;"></div>
<div style="left:228px;top:393px;width:1px;height:9px;background:#ffffff;"></div>
<span class="t " style="left:158px;width:200px;text-align:center;top:391px;font-size:9.6px;line-height:11px;height:11px;color:#1010f4;transform:scaleX(0.834);transform-origin:50% 0;">Bytes</span>
<div style="left:287px;top:393px;width:1px;height:9px;background:#9a9a9a;"></div>
<div style="left:288px;top:393px;width:1px;height:9px;background:#ffffff;"></div>
<span class="t " style="left:218px;width:200px;text-align:center;top:391px;font-size:9.6px;line-height:11px;height:11px;color:#1010f4;transform:scaleX(0.834);transform-origin:50% 0;">Size</span>
<div style="left:346px;top:393px;width:1px;height:9px;background:#9a9a9a;"></div>
<div style="left:347px;top:393px;width:1px;height:9px;background:#ffffff;"></div>
<span class="t " style="left:270px;width:200px;text-align:center;top:391px;font-size:9.6px;line-height:11px;height:11px;color:#1010f4;transform:scaleX(0.834);transform-origin:50% 0;">Rate</span>
<div style="left:392px;top:393px;width:1px;height:9px;background:#9a9a9a;"></div>
<div style="left:393px;top:393px;width:1px;height:9px;background:#ffffff;"></div>
<span class="t " style="left:323.5px;width:200px;text-align:center;top:391px;font-size:9.6px;line-height:11px;height:11px;color:#1010f4;transform:scaleX(0.834);transform-origin:50% 0;">Type</span>
<div style="left:452px;top:393px;width:1px;height:9px;background:#9a9a9a;"></div>
<div style="left:453px;top:393px;width:1px;height:9px;background:#ffffff;"></div>
<span class="t " style="left:383px;width:200px;text-align:center;top:391px;font-size:9.6px;line-height:11px;height:11px;color:#1010f4;transform:scaleX(0.834);transform-origin:50% 0;">Status</span>
<div style="left:512px;top:393px;width:1px;height:9px;background:#9a9a9a;"></div>
<div style="left:513px;top:393px;width:1px;height:9px;background:#ffffff;"></div>
<span class="t " style="left:488px;width:200px;text-align:center;top:391px;font-size:9.6px;line-height:11px;height:11px;color:#1010f4;transform:scaleX(0.834);transform-origin:50% 0;">Source</span>
<div style="left:662px;top:393px;width:1px;height:9px;background:#9a9a9a;"></div>
<div style="left:663px;top:393px;width:1px;height:9px;background:#ffffff;"></div>
<div style="left:4px;top:391px;width:792px;height:1px;background:#ffffff;"></div>
<div style="left:4px;top:403px;width:791px;height:1px;background:#bab6ae;"></div>
<div style="left:4px;top:404px;width:791px;height:1px;background:#858582;"></div>
<span class="t " style="left:298px;width:200px;text-align:center;top:410px;font-size:9px;line-height:12px;height:12px;color:#000;transform:scaleX(0.89);transform-origin:50% 0;">No transfers...</span>
<div style="left:795px;top:390px;width:1px;height:93px;background:#fbfbfa;"></div>
<div style="left:796px;top:390px;width:1px;height:93px;background:#fbfbfa;"></div>
<div style="left:3px;top:482px;width:794px;height:1px;background:#e2e0dc;"></div>
<div style="left:3px;top:483px;width:794px;height:1px;background:#eaeae8;"></div>
<div style="left:3px;top:484px;width:794px;height:1px;background:#f2f1ee;"></div>
<span class="t " style="left:3.8px;top:485px;font-size:9px;line-height:12px;height:12px;color:#000;transform:scaleX(0.9);transform-origin:0 0;">Ready</span>
<div style="left:3px;top:485px;width:572px;height:1px;background:#bcb8b0;"></div>
<div style="left:3px;top:496px;width:572px;height:1px;background:#ffffff;"></div>
<div style="left:574px;top:485px;width:1px;height:12px;background:#ffffff;"></div>
<div style="left:577px;top:485px;width:117px;height:1px;background:#9a9a96;"></div>
<div style="left:577px;top:485px;width:1px;height:12px;background:#a4a4a0;"></div>
<div style="left:577px;top:496px;width:117px;height:1px;background:#ffffff;"></div>
<div style="left:693px;top:485px;width:1px;height:12px;background:#ffffff;"></div>
<div style="left:694px;top:486px;width:1px;height:11px;background:#eeede9;"></div>
<div style="left:696px;top:485px;width:15px;height:1px;background:#9a9a96;"></div>
<div style="left:696px;top:485px;width:1px;height:12px;background:#a4a4a0;"></div>
<div style="left:696px;top:496px;width:15px;height:1px;background:#ffffff;"></div>
<div style="left:710px;top:485px;width:1px;height:12px;background:#ffffff;"></div>
<div style="left:711px;top:486px;width:1px;height:11px;background:#eeede9;"></div>
<div style="left:712px;top:485px;width:16px;height:1px;background:#9a9a96;"></div>
<div style="left:712px;top:485px;width:1px;height:12px;background:#a4a4a0;"></div>
<div style="left:712px;top:496px;width:16px;height:1px;background:#ffffff;"></div>
<div style="left:727px;top:485px;width:1px;height:12px;background:#ffffff;"></div>
<div style="left:728px;top:486px;width:1px;height:11px;background:#eeede9;"></div>
<div style="left:729px;top:485px;width:17px;height:1px;background:#9a9a96;"></div>
<div style="left:729px;top:485px;width:1px;height:12px;background:#a4a4a0;"></div>
<div style="left:729px;top:496px;width:17px;height:1px;background:#ffffff;"></div>
<div style="left:745px;top:485px;width:1px;height:12px;background:#ffffff;"></div>
<div style="left:746px;top:486px;width:1px;height:11px;background:#eeede9;"></div>
<div style="left:748px;top:485px;width:17px;height:1px;background:#9a9a96;"></div>
<div style="left:748px;top:485px;width:1px;height:12px;background:#a4a4a0;"></div>
<div style="left:748px;top:496px;width:17px;height:1px;background:#ffffff;"></div>
<div style="left:764px;top:485px;width:1px;height:12px;background:#ffffff;"></div>
<div style="left:765px;top:486px;width:1px;height:11px;background:#eeede9;"></div>
<div style="left:766px;top:485px;width:18px;height:1px;background:#9a9a96;"></div>
<div style="left:766px;top:485px;width:1px;height:12px;background:#a4a4a0;"></div>
<div style="left:766px;top:496px;width:18px;height:1px;background:#ffffff;"></div>
<div style="left:783px;top:485px;width:1px;height:12px;background:#ffffff;"></div>
<div style="left:784px;top:486px;width:1px;height:11px;background:#eeede9;"></div>
<span class="t " style="left:698px;top:486px;font-size:8px;line-height:11px;height:11px;color:#222;font-weight:bold;transform:scaleX(0.8);transform-origin:0 0;">1</span>
<span class="t " style="left:657px;width:200px;text-align:center;top:488.5px;font-size:4.5px;line-height:8px;height:8px;color:#fff;transform:scaleX(1);transform-origin:50% 0;font-weight:bold;">RCV</span>
<span class="t " style="left:656.4px;width:200px;text-align:center;top:488px;font-size:4.5px;line-height:8px;height:8px;color:#8e8e8c;transform:scaleX(1);transform-origin:50% 0;font-weight:bold;">RCV</span>
<span class="t " style="left:675.6px;width:200px;text-align:center;top:488.5px;font-size:4.5px;line-height:8px;height:8px;color:#fff;transform:scaleX(1);transform-origin:50% 0;font-weight:bold;">XMT</span>
<span class="t " style="left:675px;width:200px;text-align:center;top:488px;font-size:4.5px;line-height:8px;height:8px;color:#8e8e8c;transform:scaleX(1);transform-origin:50% 0;font-weight:bold;">XMT</span>
<svg style="left:787px;top:486px" width="10" height="11" viewBox="0 0 10 11"><path d="M0.5 10.5 L9.5 1.5 M3.5 10.5 L9.5 4.5 M6.5 10.5 L9.5 7.5" stroke="#808080" stroke-width="1"/><path d="M1.5 10.5 L9.5 2.5 M4.5 10.5 L9.5 5.5 M7.5 10.5 L9.5 8.5" stroke="#fff" stroke-width="0.8"/></svg>
<div style="left:127px;top:83px;width:30px;height:15px;background:#ffffff;"></div>
<div style="left:127px;top:83px;width:30px;height:1px;background:#7a7a7a;"></div>
<div style="left:127px;top:83px;width:1px;height:15px;background:#7a7a7a;"></div>
<div style="left:128px;top:84px;width:28px;height:1px;background:#5a5a5a;"></div>
<div style="left:128px;top:84px;width:1px;height:13px;background:#5a5a5a;"></div>
<div style="left:127px;top:97px;width:30px;height:1px;background:#f4f2ee;"></div>
<div style="left:156px;top:83px;width:1px;height:15px;background:#f4f2ee;"></div>
<span class="t " style="left:130.2px;top:85px;font-size:8px;line-height:9px;height:9px;color:#222;transform:scaleX(1);transform-origin:0 0;">*</span>
<div style="left:529px;top:83px;width:30px;height:15px;background:#ffffff;"></div>
<div style="left:529px;top:83px;width:30px;height:1px;background:#7a7a7a;"></div>
<div style="left:529px;top:83px;width:1px;height:15px;background:#7a7a7a;"></div>
<div style="left:530px;top:84px;width:28px;height:1px;background:#5a5a5a;"></div>
<div style="left:530px;top:84px;width:1px;height:13px;background:#5a5a5a;"></div>
<div style="left:529px;top:97px;width:30px;height:1px;background:#f4f2ee;"></div>
<div style="left:558px;top:83px;width:1px;height:15px;background:#f4f2ee;"></div>
<span class="t " style="left:532.2px;top:85px;font-size:8px;line-height:9px;height:9px;color:#222;transform:scaleX(1);transform-origin:0 0;">*</span>
<div style="left:51px;top:104px;width:299px;height:15px;background:#ffffff;"></div>
<div style="left:51px;top:104px;width:299px;height:1px;background:#7a7a7a;"></div>
<div style="left:51px;top:104px;width:1px;height:15px;background:#7a7a7a;"></div>
<div style="left:52px;top:105px;width:297px;height:1px;background:#5a5a5a;"></div>
<div style="left:52px;top:105px;width:1px;height:13px;background:#5a5a5a;"></div>
<div style="left:51px;top:118px;width:299px;height:1px;background:#f4f2ee;"></div>
<div style="left:349px;top:104px;width:1px;height:15px;background:#f4f2ee;"></div>
<div style="left:336px;top:106px;width:13px;height:12px;background:#d4d0c8;"></div>
<div style="left:336px;top:106px;width:12px;height:1px;background:#fdfcfa;"></div>
<div style="left:336px;top:106px;width:1px;height:11px;background:#fdfcfa;"></div>
<div style="left:337px;top:107px;width:10px;height:1px;background:#eceae5;"></div>
<div style="left:337px;top:107px;width:1px;height:9px;background:#eceae5;"></div>
<div style="left:348px;top:106px;width:1px;height:12px;background:#4c4c4c;"></div>
<div style="left:336px;top:117px;width:13px;height:1px;background:#4c4c4c;"></div>
<div style="left:347px;top:107px;width:1px;height:10px;background:#6c6c6c;"></div>
<div style="left:337px;top:116px;width:11px;height:1px;background:#6c6c6c;"></div>
<span class="t " style="left:54.2px;top:105.5px;font-size:9px;line-height:12px;height:12px;color:#000;transform:scaleX(0.916);transform-origin:0 0;">C:\Documents and Settings\lolberding\Desktop\grading\</span>
<div style="left:471px;top:104px;width:297px;height:15px;background:#ffffff;"></div>
<div style="left:471px;top:104px;width:297px;height:1px;background:#7a7a7a;"></div>
<div style="left:471px;top:104px;width:1px;height:15px;background:#7a7a7a;"></div>
<div style="left:472px;top:105px;width:295px;height:1px;background:#5a5a5a;"></div>
<div style="left:472px;top:105px;width:1px;height:13px;background:#5a5a5a;"></div>
<div style="left:471px;top:118px;width:297px;height:1px;background:#f4f2ee;"></div>
<div style="left:767px;top:104px;width:1px;height:15px;background:#f4f2ee;"></div>
<div style="left:754px;top:106px;width:13px;height:12px;background:#d4d0c8;"></div>
<div style="left:754px;top:106px;width:12px;height:1px;background:#fdfcfa;"></div>
<div style="left:754px;top:106px;width:1px;height:11px;background:#fdfcfa;"></div>
<div style="left:755px;top:107px;width:10px;height:1px;background:#eceae5;"></div>
<div style="left:755px;top:107px;width:1px;height:9px;background:#eceae5;"></div>
<div style="left:766px;top:106px;width:1px;height:12px;background:#4c4c4c;"></div>
<div style="left:754px;top:117px;width:13px;height:1px;background:#4c4c4c;"></div>
<div style="left:765px;top:107px;width:1px;height:10px;background:#6c6c6c;"></div>
<div style="left:755px;top:116px;width:11px;height:1px;background:#6c6c6c;"></div>
<span class="t " style="left:474.2px;top:105.5px;font-size:9px;line-height:12px;height:12px;color:#000;transform:scaleX(0.916);transform-origin:0 0;">/</span>
<svg style="left:0;top:0" width="800" height="500" viewBox="0 0 800 500"><g stroke="#f4ecc8" stroke-width="1.6" fill="#f4ecc8" opacity=".9"><path d="M16.2 44.8 L19.8 48.8 H18.2 V58.6 H14 V48.8 H12.6 Z"/><path d="M20.9 46.3 H25.1 V56.2 H27.2 L23.4 60.2 L19.7 56.2 H20.9 Z"/></g><defs><linearGradient id="ua" x1="0" x2="1"><stop offset="0" stop-color="#2020ff"/><stop offset=".3" stop-color="#4040ff"/><stop offset=".48" stop-color="#aab4ff"/><stop offset=".62" stop-color="#3838ff"/><stop offset="1" stop-color="#1414ec"/></linearGradient></defs><path d="M16.2 44.8 L19.8 48.8 H18.2 V58.6 H14 V48.8 H12.6 Z" fill="url(#ua)"/><path d="M16.2 45.8 L18 48.2 H14.4 Z" fill="#fff"/><path d="M20.9 46.3 H25.1 V56.2 H27.2 L23.4 60.2 L19.7 56.2 H20.9 Z" fill="url(#ua)"/><path d="M23.4 59.4 L25.4 56.8 H21.4 Z" fill="#fff"/><path d="M44.8 44.8 L35.8 52.9 V54.8 H43 L39.4 59.7 H42.6 L51.3 51.7 V50.8 H43.6 L46.4 44.8 Z" fill="#12127e"/><path d="M44.8 44.8 L35.8 52.9 V54.8 H38 L40 52.4 L45.6 45.2 Z" fill="#2424f4"/><path d="M43 54.8 L39.4 59.7 H40.6 L44.4 54.8Z" fill="#2424f4"/><g transform="translate(1 1)" fill="#fff" stroke="#fff"><path d="M60 50.8 H64.5 V49.6 L67.8 52.5 L64.5 55.4 V54.2 H60 Z M75 50.8 H70.5 V49.6 L67.2 52.5 L70.5 55.4 V54.2 H75 Z" stroke="none"/><path d="M64.4 56.2 L70.8 48.6" stroke-width="1.2"/></g><path d="M60 50.8 H64.5 V49.6 L67.8 52.5 L64.5 55.4 V54.2 H60 Z M75 50.8 H70.5 V49.6 L67.2 52.5 L70.5 55.4 V54.2 H75 Z" fill="#828282"/><path d="M64.2 56.2 L70.8 48.4" stroke="#4a4a4a" stroke-width="1.1"/><g fill="none"><path d="M105.8 45.8 L112.4 55.6" stroke="#50505a" stroke-width="1.9"/><path d="M114 45.8 L107.4 55.6" stroke="#5c5c6a" stroke-width="1.9"/><path d="M105.4 46.2 L109.6 52.4" stroke="#8a8ae0" stroke-width=".8"/><path d="M113.2 46.4 L110.6 50.4" stroke="#9a9ad8" stroke-width=".7"/><circle cx="106.4" cy="57.2" r="1.6" stroke="#484848" stroke-width="1.7" fill="#a8a8a8"/><circle cx="113.4" cy="57.2" r="1.6" stroke="#484848" stroke-width="1.7" fill="#a8a8a8"/><circle cx="106.4" cy="57.2" r="2.6" stroke="#ececec" stroke-width=".5" opacity=".6"/></g><path d="M128.6 46.6 H132.2 L134.2 48.6 V54.8 H128.6 Z" fill="#fff" stroke="#14227e" stroke-width="1.1" stroke-linejoin="round"/><path d="M132.2 46.6 V48.6 H134.2 Z" fill="#14227e"/><path d="M130.0 53.199999999999996 H132.79999999999998" stroke="#3c58b0" stroke-width=".9"/><path d="M130.0 51.3 H132.79999999999998" stroke="#3c58b0" stroke-width=".9"/><path d="M130.0 49.4 H132.79999999999998" stroke="#3c58b0" stroke-width=".9"/><path d="M133 51 H137.6 L140 53.4 V58.8 H133 Z" fill="#fff" stroke="#14227e" stroke-width="1.1" stroke-linejoin="round"/><path d="M137.6 51 V53.4 H140 Z" fill="#14227e"/><path d="M134.4 57.199999999999996 H138.6" stroke="#3c58b0" stroke-width=".9"/><path d="M134.4 55.3 H138.6" stroke="#3c58b0" stroke-width=".9"/><rect x="133.6" y="56.4" width="5.8" height="2" fill="#2238b4"/><rect x="151.8" y="47" width="10.4" height="8.4" fill="#fff" stroke="#0c1a78" stroke-width="1.7"/><rect x="155" y="45.6" width="4" height="2" fill="#7a7a8a"/><path d="M157 51 H161.6 L164 53.4 V58.8 H157 Z" fill="#fff" stroke="#14227e" stroke-width="1.1" stroke-linejoin="round"/><path d="M161.6 51 V53.4 H164 Z" fill="#14227e"/><path d="M158.4 57.199999999999996 H162.6" stroke="#3c58b0" stroke-width=".9"/><path d="M158.4 55.3 H162.6" stroke="#3c58b0" stroke-width=".9"/><rect x="157.6" y="56.4" width="5.8" height="2" fill="#2238b4"/><defs><linearGradient id="dg1" x1="0" y1="0" x2="0" y2="1"><stop offset=".6" stop-color="#fff"/><stop offset="1" stop-color="#9cb8f0"/></linearGradient></defs><path d="M195.4 45.4 H202.6 L206.0 48.8 V59.8 H195.4 Z" fill="url(#dg1)" stroke="#1a2a8a" stroke-width="1.1" stroke-linejoin="round"/><path d="M202.6 45.4 V48.8 H206.0 Z" fill="#1a2a8a"/><path d="M197.0 48.4 H202.4" stroke="#4a64b8" stroke-width="1"/><path d="M197.0 50.6 H204.4" stroke="#9aa0c0" stroke-width="1"/><path d="M197.0 52.8 H204.4" stroke="#4a64b8" stroke-width="1"/><path d="M197.0 55.0 H204.4" stroke="#4a64b8" stroke-width="1"/><path d="M197.0 57.2 H204.4" stroke="#4a64b8" stroke-width="1"/><defs><linearGradient id="dg2" x1="0" y1="0" x2="0" y2="1"><stop offset=".6" stop-color="#fff"/><stop offset="1" stop-color="#9cb8f0"/></linearGradient></defs><path d="M219.4 45.4 H226.6 L230.0 48.8 V59.8 H219.4 Z" fill="url(#dg2)" stroke="#1a2a8a" stroke-width="1.1" stroke-linejoin="round"/><path d="M226.6 45.4 V48.8 H230.0 Z" fill="#1a2a8a"/><path d="M221.0 48.6 H226.4" stroke="#3c50a8" stroke-width="1.6" stroke-dasharray="1.2 .9"/><path d="M221.0 51.800000000000004 H228.4" stroke="#3c50a8" stroke-width="1.6" stroke-dasharray="1.2 .9"/><path d="M221.0 55.0 H228.4" stroke="#3c50a8" stroke-width="1.6" stroke-dasharray="1.2 .9"/><defs><linearGradient id="dg3" x1="0" y1="0" x2="0" y2="1"><stop offset=".6" stop-color="#fff"/><stop offset="1" stop-color="#9cb8f0"/></linearGradient></defs><path d="M244.2 46.2 H251.39999999999998 L254.79999999999998 49.6 V60.6 H244.2 Z" fill="url(#dg3)" stroke="#1a2a8a" stroke-width="1.1" stroke-linejoin="round"/><path d="M251.39999999999998 46.2 V49.6 H254.79999999999998 Z" fill="#1a2a8a"/><path d="M246.6 49.2 H249.6" stroke="#3c50a8" stroke-width="1.8" stroke-dasharray="1.2 .8"/><path d="M245.79999999999998 53.2 H253.2" stroke="#4a64b8" stroke-width="1"/><path d="M245.79999999999998 55.400000000000006 H253.2" stroke="#4a64b8" stroke-width="1"/><path d="M245.79999999999998 57.6 H253.2" stroke="#4a64b8" stroke-width="1"/><path d="M283.2 47.2 L292.4 54" stroke="#7c7c7c" stroke-width="1"/><path d="M284 47 L292.8 53.4" stroke="#f0f0f0" stroke-width=".6"/><path d="M292 53.2 L299.2 58.2" stroke="#0a0a60" stroke-width="4" stroke-linecap="round"/><path d="M292.4 53.2 L299 57.8" stroke="#1838e0" stroke-width="2.4" stroke-linecap="round"/><g><path d="M286 56.6 L293.2 48.2" stroke="#4e4e4e" stroke-width="3.4" stroke-linecap="butt"/><circle cx="293.8" cy="47.6" r="2.5" fill="#4e4e4e"/><circle cx="285.6" cy="57" r="2.5" fill="#4e4e4e"/><path d="M286 56.6 L293.2 48.2" stroke="#ececec" stroke-width="1.7"/><circle cx="293.8" cy="47.6" r="1.6" fill="#ececec"/><circle cx="285.6" cy="57" r="1.6" fill="#ececec"/><path d="M293.6 47.8 L296.6 44.6" stroke="#d4d0c8" stroke-width="1.7"/><path d="M285.8 56.8 L282.8 60" stroke="#d4d0c8" stroke-width="1.7"/></g><path d="M307.4 45.4 L311.6 50.4 V59.4 L307.4 55 Z" fill="#3058d8" stroke="#0a1460" stroke-width=".9"/><path d="M307.4 45.4 L310.4 44.2 L320 45.8 L324 50.4 H311.6 Z" fill="#b8c8f4" stroke="#0a1460" stroke-width=".9"/><path d="M309 45 L311 44.4 L313 46.6 L311.4 47.6 Z" fill="#1838c8"/><path d="M311.2 48.2 H315.6 L316.6 50 H311.6 Z" fill="#f0a020" stroke="#604000" stroke-width=".5"/><rect x="311.6" y="50.4" width="12.4" height="9" fill="#fff" stroke="#0a1460" stroke-width="1"/><rect x="312.2" y="57.4" width="11.2" height="1.6" fill="#b0c4f4"/><text x="317.9" y="57.8" font-size="7.6" font-weight="bold" fill="#2038c0" text-anchor="middle" font-family="Liberation Sans,sans-serif">$</text><defs><linearGradient id="tp" x1="0" y1="0" x2="1" y2="1"><stop offset=".45" stop-color="#fff"/><stop offset=".62" stop-color="#7a8ef0"/><stop offset="1" stop-color="#1c2ee0"/></linearGradient></defs><path d="M331.8 46.4 H347.4 V59.2 H334 L331.8 57 Z" fill="url(#tp)" stroke="#0c1470" stroke-width="1"/><path d="M331.8 57 H334 V59.2" fill="none" stroke="#0c1470" stroke-width=".8"/><text x="338.4" y="56.8" font-size="10" font-weight="bold" fill="#0c1470" text-anchor="middle" font-family="Liberation Sans,sans-serif">T</text><path d="M341.4 44.2 H346.4 V45.6 H341.4 Z" fill="#e8b020" stroke="#705000" stroke-width=".4"/><path d="M342.8 45.6 H345 V47.2 H346.6 V48.4 H341.2 V47.2 H342.8 Z" fill="#d09818"/><path d="M343.9 48.4 V50.4" stroke="#403000" stroke-width=".8"/><path d="M373.6 52.4 Q382.1 44 390.8 52.4 Q382.1 60.6 373.6 52.4 Z" fill="#fff" stroke="#3a3a3a" stroke-width="1.1"/><circle cx="381.8" cy="52.3" r="4.4" fill="#0a0a58"/><circle cx="381.8" cy="52.3" r="3.3" fill="#2424d0"/><path d="M383.4 50.8 A2 2 0 1 0 383.4 53.8" fill="none" stroke="#e0e4ff" stroke-width="1"/><defs><linearGradient id="sp" x1="0" x2="1"><stop offset="0" stop-color="#5a8ae0"/><stop offset="1" stop-color="#c4d8f8"/></linearGradient></defs><ellipse cx="429" cy="52" rx="2.4" ry="8" fill="#fff" stroke="#1a1a2a" stroke-width=".9"/><path d="M418.4 49.2 H421 L428.6 43.8 V60.2 L421 55.2 H418.4 Z" fill="url(#sp)" stroke="#20306a" stroke-width=".9" stroke-linejoin="round"/><ellipse cx="428.8" cy="52" rx="1" ry="2.6" fill="#202020"/><path d="M463.8 52 L467.0 48.6 H465.3 V45 H462.3 V48.6 H460.6 Z" fill="#fff" stroke="#3a3aff" stroke-width="1" stroke-linejoin="round"/><path d="M463.8 60 L467.0 56.6 H465.3 V53 H462.3 V56.6 H460.6 Z" fill="#fff" stroke="#3a3aff" stroke-width="1" stroke-linejoin="round"/><path d="M470.6 44.4 L473.8 47.8 H472.1 V51.4 H469.1 V47.8 H467.40000000000003 Z" fill="#fff" stroke="#3a3aff" stroke-width="1" stroke-linejoin="round"/><path d="M470.6 52.4 L473.8 55.8 H472.1 V59.4 H469.1 V55.8 H467.40000000000003 Z" fill="#fff" stroke="#3a3aff" stroke-width="1" stroke-linejoin="round"/><circle cx="510" cy="52" r="8" fill="#1c2f78"/><path d="M513.4 45 L508.4 59" stroke="#fff" stroke-width="1.5"/><g transform="translate(552.5 0) scale(1.1 1)"><text x=".6" y="58.7" font-size="16.5" font-weight="bold" fill="#2a2af0" text-anchor="middle" font-family="Liberation Sans,sans-serif">?</text><text x="0" y="58.3" font-size="16.5" font-weight="bold" fill="#0c0c7c" stroke="#0c0c7c" stroke-width=".4" text-anchor="middle" font-family="Liberation Sans,sans-serif">?</text></g><path d="M16.8 90.8 L12.6 94.4" stroke="#fff" stroke-width="2.6" stroke-linecap="round" opacity=".6"/><path d="M16.599999999999998 90.8 L12.799999999999999 94.2" stroke="#cfa030" stroke-width="1.7" stroke-linecap="round"/><circle cx="19.5" cy="88.3" r="3.1" fill="#f6f6f6" stroke="#acacac" stroke-width="1.1"/><path d="M17.599999999999998 87.2 A2.2 2.2 0 0 1 19.8 86.2" stroke="#fff" stroke-width="1" fill="none"/><rect x="32.6" y="87.2" width="9.6" height="6.6" rx="1" fill="#fff" transform="translate(.8 .8)"/><rect x="32.6" y="87.2" width="9.6" height="6.6" rx="1" fill="#f8f8f8" stroke="#8e8e8e" stroke-width="1.1"/><path d="M33.4 87 L35 86.2 H40 L41.6 87" stroke="#9a9a9a" stroke-width=".9" fill="none"/><circle cx="35.8" cy="90.6" r="1" fill="#555"/><circle cx="38.6" cy="90" r=".9" fill="#d89848"/><path d="M52.6 95.2 V88 H53.6 V86.8 H56.6 V88 H62.6 V95.2 Z" fill="#fdf6a4" stroke="#505050" stroke-width="1.1" stroke-linejoin="round"/><path d="M53.2 88.6 H62" stroke="#fffce0" stroke-width="1"/><circle cx="61.2" cy="87.6" r="2.6" fill="#fdf6c8"/><g stroke="#e8b830" stroke-width="1"><path d="M61.2 84 V91.2 M57.8 87.6 H64.6 M58.8 85.2 L63.6 90 M63.6 85.2 L58.8 90"/></g><circle cx="61.2" cy="87.6" r="1.4" fill="#fff"/><path d="M75.4 87 L84.60000000000001 95.6" stroke="#fff" stroke-width=".7" opacity=".8"/><path d="M74.60000000000001 86.4 L83.8 95" stroke="#828282" stroke-width="1.2"/><path d="M84.0 86.4 L74.8 95" stroke="#6e6e6e" stroke-width="1.5"/><path d="M77.60000000000001 92.4 L74.60000000000001 95.2" stroke="#6a6a6a" stroke-width="2"/><path d="M105.6 86 V94.8" stroke="#000" stroke-width="1.3"/><path d="M101.0 89.4 H110.19999999999999 M101.0 91.8 H110.19999999999999" stroke="#000" stroke-width="1"/><g fill="none" stroke="#1a1a1a" stroke-width="1"><path d="M166.6 89.6 A4.5 4.5 0 0 1 174.4 87.4"/><path d="M175.4 91 A4.5 4.5 0 0 1 167.6 93.2"/></g><path d="M173.6 88.8 L175.9 87 L175.9 90 Z M168.4 91.8 L166.1 93.6 L166.1 90.6 Z" fill="#1a1a1a"/><g stroke="#1414a0" stroke-width="1.15" fill="none"><path d="M13.7 105.8 V115.4 M12 105.9 H16.4 M12.4 115.4 H15.2"/><path d="M16.3 108.9 V115.4 M15.4 108.9 H18.6 M15.4 115.4 H18.8"/></g><path d="M18 110.4 H22 M18 112 H22 M18 113.6 H22" stroke="#3c48b0" stroke-width="1.3"/><path d="M32.2 108 Q32.2 106.6 33.4 106.6 H36.4 L37.4 108 H42.0 V115.8 H32.2 Z" fill="#f4f4f4" stroke="#181818" stroke-width="1.1" stroke-linejoin="round"/><path d="M36.0 110 V113.6 H40.2" stroke="#1a1ae8" stroke-width="1.1" fill="none"/><path d="M34.0 111.6 L36.0 109.4 L38.0 111.6 Z" fill="#1a1ae8"/><g stroke="#f6f2dc" stroke-width="1.8" fill="#f6f2dc"><path d="M291.6 86.4 L293.4 88.6 H292.6 V94.8 H290.6 V88.6 H289.8 Z M295.2 86.8 H297.2 V92.8 H298 L296.2 95 L294.4 92.8 H295.2 Z"/></g><path d="M291.6 86.4 L293.4 88.6 H292.6 V94.8 H290.6 V88.6 H289.8 Z M295.2 86.8 H297.2 V92.8 H298 L296.2 95 L294.4 92.8 H295.2 Z" fill="#1c1cff"/><path d="M303.8 90.2 H307.2 L305.5 93.2 Z" fill="#303030"/><path d="M322.6 84.9 L315.8 91.3 H321.2 L319.8 95.8 H321.40000000000003 L327.1 89.7 H321.6 L325.0 84.9 Z" fill="#10108a"/><g transform="translate(.7 .7)" fill="#fff"><path d="M337.6 89.6 L340.20000000000005 91.3 L337.6 93 Z M345.20000000000005 87.6 L342.6 89.4 L345.20000000000005 91.2 Z"/></g><path d="M337.6 89.6 L340.20000000000005 91.3 L337.6 93 Z" fill="#6e6a66"/><path d="M345.20000000000005 87.6 L342.6 89.4 L345.20000000000005 91.2 Z" fill="#6e6a66"/><g transform="translate(.7 .7)" fill="#fff"><path d="M360.6 89.6 L358 91.3 L360.6 93 Z M364.6 87.4 L366.6 89.4 L364.6 91.4 L362.6 89.4 Z"/></g><path d="M360.6 89.6 L358 91.3 L360.6 93 Z M364.6 87.4 L366.6 89.4 L364.6 91.4 L362.6 89.4 Z" fill="#6e6a66"/><path d="M380.6402 84.89999999999999 H385.3598 L388.7 88.24019999999999 V92.9598 L385.3598 96.3 H380.6402 L377.3 92.9598 V88.24019999999999 Z" fill="#fff" transform="translate(.8 .8)"/><path d="M380.6402 84.89999999999999 H385.3598 L388.7 88.24019999999999 V92.9598 L385.3598 96.3 H380.6402 L377.3 92.9598 V88.24019999999999 Z" fill="#85817b"/><g transform="translate(.8 .8)"><path d="M370.2 110.4 H375.59999999999997 V108.2 L380.4 112.1 L375.59999999999997 116 V113.8 H370.2 Z" fill="#fff"/></g><path d="M370.2 110.4 H375.59999999999997 V108.2 L380.4 112.1 L375.59999999999997 116 V113.8 H370.2 Z" fill="#7c7872"/><path d="M413.6 90.8 L409.4 94.4" stroke="#fff" stroke-width="2.6" stroke-linecap="round" opacity=".6"/><path d="M413.4 90.8 L409.6 94.2" stroke="#cfa030" stroke-width="1.7" stroke-linecap="round"/><circle cx="416.3" cy="88.3" r="3.1" fill="#f6f6f6" stroke="#acacac" stroke-width="1.1"/><path d="M414.4 87.2 A2.2 2.2 0 0 1 416.6 86.2" stroke="#fff" stroke-width="1" fill="none"/><rect x="430.4" y="86.6" width="7.4" height="7.8" fill="none" stroke="#fff" stroke-width="1.2" stroke-dasharray="2 1.4"/><g stroke="#333" stroke-width="1" fill="none"><path d="M429.4 88 L430.8 86.2 L432.2 88"/><path d="M436.6 85.2 L438.6 86.6 L436.6 88"/><path d="M436.4 93 L437.8 94.8 L439.2 93"/><path d="M432 92.8 L430 94.2 L432 95.6"/></g><path d="M450.0 95.2 V88 H451.0 V86.8 H454.0 V88 H460.0 V95.2 Z" fill="#fdf6a4" stroke="#505050" stroke-width="1.1" stroke-linejoin="round"/><path d="M450.59999999999997 88.6 H459.4" stroke="#fffce0" stroke-width="1"/><circle cx="458.59999999999997" cy="87.6" r="2.6" fill="#fdf6c8"/><g stroke="#e8b830" stroke-width="1"><path d="M458.59999999999997 84 V91.2 M455.2 87.6 H462.0 M456.2 85.2 L461.0 90 M461.0 85.2 L456.2 90"/></g><circle cx="458.59999999999997" cy="87.6" r="1.4" fill="#fff"/><path d="M473.8 87 L483.0 95.6" stroke="#fff" stroke-width=".7" opacity=".8"/><path d="M473.0 86.4 L482.20000000000005 95" stroke="#828282" stroke-width="1.2"/><path d="M482.40000000000003 86.4 L473.20000000000005 95" stroke="#6e6e6e" stroke-width="1.5"/><path d="M476.0 92.4 L473.0 95.2" stroke="#6a6a6a" stroke-width="2"/><path d="M507.2 86 V94.8" stroke="#000" stroke-width="1.3"/><path d="M502.59999999999997 89.4 H511.8 M502.59999999999997 91.8 H511.8" stroke="#000" stroke-width="1"/><g fill="none" stroke="#1a1a1a" stroke-width="1"><path d="M567.6 89.6 A4.5 4.5 0 0 1 575.4 87.4"/><path d="M576.4 91 A4.5 4.5 0 0 1 568.6 93.2"/></g><path d="M574.6 88.8 L576.9 87 L576.9 90 Z M569.4 91.8 L567.1 93.6 L567.1 90.6 Z" fill="#1a1a1a"/><g transform="translate(.8 .8)"><path d="M428.6 110 H423.40000000000003 V107.8 L418.6 111.7 L423.40000000000003 115.6 V113.4 H428.6 Z" fill="#fff"/></g><path d="M428.6 110 H423.40000000000003 V107.8 L418.6 111.7 L423.40000000000003 115.6 V113.4 H428.6 Z" fill="#7c7872"/><path d="M450.6 108 Q450.6 106.6 451.8 106.6 H454.8 L455.8 108 H460.4 V115.8 H450.6 Z" fill="#f4f4f4" stroke="#181818" stroke-width="1.1" stroke-linejoin="round"/><path d="M454.4 110 V113.6 H458.6" stroke="#1a1ae8" stroke-width="1.1" fill="none"/><path d="M452.4 111.6 L454.4 109.4 L456.4 111.6 Z" fill="#1a1ae8"/><g stroke="#f6f2dc" stroke-width="1.8" fill="#f6f2dc"><path d="M689.6 86.4 L691.4 88.6 H690.6 V94.8 H688.6 V88.6 H687.8 Z M693.2 86.8 H695.2 V92.8 H696 L694.2 95 L692.4 92.8 H693.2 Z"/></g><path d="M689.6 86.4 L691.4 88.6 H690.6 V94.8 H688.6 V88.6 H687.8 Z M693.2 86.8 H695.2 V92.8 H696 L694.2 95 L692.4 92.8 H693.2 Z" fill="#1c1cff"/><path d="M702 90.2 H705.4 L703.7 93.2 Z" fill="#303030"/><path d="M721.0 84.9 L714.2 91.3 H719.6 L718.2 95.8 H719.8000000000001 L725.5 89.7 H720.0 L723.4000000000001 84.9 Z" fill="#10108a"/><g fill="#f8f6ec"><circle cx="737.8" cy="91.3" r="2.9"/><circle cx="742.8" cy="89.6" r="3"/></g><path d="M737.6 88.8 L739.4 91.3 L737.6 93.8 L735.8 91.3 Z M742.8 87 L744.8 89.6 L742.8 92.2 L740.8 89.6 Z" fill="#1a1aff"/><g fill="#f8f6ec"><circle cx="757" cy="91.3" r="2.9"/><circle cx="762.8" cy="89.6" r="3"/></g><path d="M758.4 89 L755.4 91.3 L758.4 93.6 Z" fill="#c01818"/><path d="M758.4 90.2 L757 91.3 L758.4 92.4Z" fill="#f0c020"/><path d="M761.6 87.2 L764.8 89.6 L761.6 92 Z" fill="#c01818"/><path d="M761.6 88.6 L762.8 89.6 L761.6 90.6 Z" fill="#f0c020"/><path d="M778.8402000000001 84.89999999999999 H783.5598 L786.9000000000001 88.24019999999999 V92.9598 L783.5598 96.3 H778.8402000000001 L775.5 92.9598 V88.24019999999999 Z" fill="#fff" transform="translate(.8 .8)"/><path d="M778.8402000000001 84.89999999999999 H783.5598 L786.9000000000001 88.24019999999999 V92.9598 L783.5598 96.3 H778.8402000000001 L775.5 92.9598 V88.24019999999999 Z" fill="#85817b"/><g stroke="#1414a0" stroke-width="1.15" fill="none"><path d="M779.1 105.8 V115.4 M777.4 105.9 H781.8 M777.8 115.4 H780.6"/><path d="M781.6999999999999 108.9 V115.4 M780.8 108.9 H784.0 M780.8 115.4 H784.1999999999999"/></g><path d="M783.4 110.4 H787.4 M783.4 112 H787.4 M783.4 113.6 H787.4" stroke="#3c48b0" stroke-width="1.3"/><path d="M338.8 110 H344.9 L341.85 113.1 Z" fill="#000"/><path d="M756.8 110 H762.9 L759.85 113.1 Z" fill="#000"/></svg>
</div></body></html>
